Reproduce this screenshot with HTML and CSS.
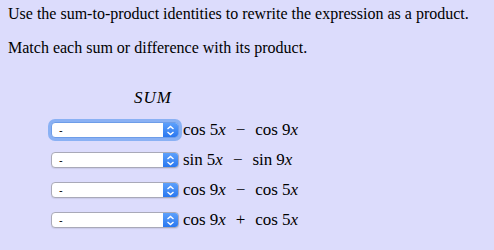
FILE: index.html
```html
<!DOCTYPE html>
<html>
<head>
<meta charset="utf-8">
<link rel="stylesheet" href="styles.css">
</head>
<body>
<p class="intro">Use the sum-to-product identities to rewrite the expression as a product.</p>
<p class="intro">Match each sum or difference with its product.</p>
<div class="match">
  <div class="head"><span class="mi">SUM</span></div>
  <div class="row">
    <div class="sel focus"><span class="val">-</span><span class="btn"><svg width="9" height="11" viewBox="0 0 9 11"><path d="M1.5 4 L4.5 1.5 L7.5 4 M1.5 7 L4.5 9.5 L7.5 7" fill="none" stroke="#fff" stroke-width="1.4"/></svg></span></div>
    <div class="expr"><span class="fn">cos</span><span>5</span><span class="mi">x</span><span class="op">−</span><span class="fn">cos</span><span>9</span><span class="mi">x</span></div>
  </div>
  <div class="row">
    <div class="sel"><span class="val">-</span><span class="btn"><svg width="9" height="11" viewBox="0 0 9 11"><path d="M1.5 4 L4.5 1.5 L7.5 4 M1.5 7 L4.5 9.5 L7.5 7" fill="none" stroke="#fff" stroke-width="1.4"/></svg></span></div>
    <div class="expr"><span class="fn">sin</span><span>5</span><span class="mi">x</span><span class="op">−</span><span class="fn">sin</span><span>9</span><span class="mi">x</span></div>
  </div>
  <div class="row">
    <div class="sel"><span class="val">-</span><span class="btn"><svg width="9" height="11" viewBox="0 0 9 11"><path d="M1.5 4 L4.5 1.5 L7.5 4 M1.5 7 L4.5 9.5 L7.5 7" fill="none" stroke="#fff" stroke-width="1.4"/></svg></span></div>
    <div class="expr"><span class="fn">cos</span><span>9</span><span class="mi">x</span><span class="op">−</span><span class="fn">cos</span><span>5</span><span class="mi">x</span></div>
  </div>
  <div class="row">
    <div class="sel"><span class="val">-</span><span class="btn"><svg width="9" height="11" viewBox="0 0 9 11"><path d="M1.5 4 L4.5 1.5 L7.5 4 M1.5 7 L4.5 9.5 L7.5 7" fill="none" stroke="#fff" stroke-width="1.4"/></svg></span></div>
    <div class="expr"><span class="fn">cos</span><span>9</span><span class="mi">x</span><span class="op">+</span><span class="fn">cos</span><span>5</span><span class="mi">x</span></div>
  </div>
</div>
</body>
</html>
```
FILE: styles.css
```css
html, body {
  margin: 0;
  background: #dcdcfc;
}
body {
  padding: 5px 8px 0 8px;
  font-family: "Liberation Serif", "Times New Roman", serif;
  font-size: 16px;
  color: #000;
}
.intro {
  margin: 0 0 16px 0;
  line-height: 18px;
}
.match {
  display: flex;
  flex-direction: column;
  padding-left: 43px;
}
.head {
  padding-left: 83px;
  height: 18px;
  line-height: 18px;
  margin-top: 16px;
  margin-bottom: 8px;
  font-size: 17px;
  letter-spacing: 1px;
}
.mi {
  font-family: "Liberation Serif", "Times New Roman", serif;
  font-style: italic;
}
.row {
  display: flex;
  align-items: center;
  height: 30px;
  gap: 4px;
}
.sel {
  width: 128px;
  height: 16px;
  box-sizing: border-box;
  border: 1px solid #a9a9b8;
  border-radius: 4px;
  background: #fff;
  display: flex;
  align-items: center;
  overflow: hidden;
  box-shadow: 0 1px 1px rgba(0,0,0,0.08);
}
.sel.focus {
  box-shadow: 0 0 0 3px #8ab1f4;
  border-color: #6e9de8;
}
.val {
  flex: 1;
  font-family: "Liberation Sans", Arial, sans-serif;
  font-size: 11px;
  padding-left: 7px;
  line-height: 14px;
}
.btn {
  width: 15px;
  height: 100%;
  background: linear-gradient(#5da0fb, #2a78f0);
  display: flex;
  align-items: center;
  justify-content: center;
}
.expr {
  font-family: "Liberation Serif", "Times New Roman", serif;
  font-size: 17px;
  white-space: nowrap;
  display: flex;
  align-items: baseline;
}
.fn {
  margin-right: 4px;
}
.op {
  margin: 0 10px;
}
```
